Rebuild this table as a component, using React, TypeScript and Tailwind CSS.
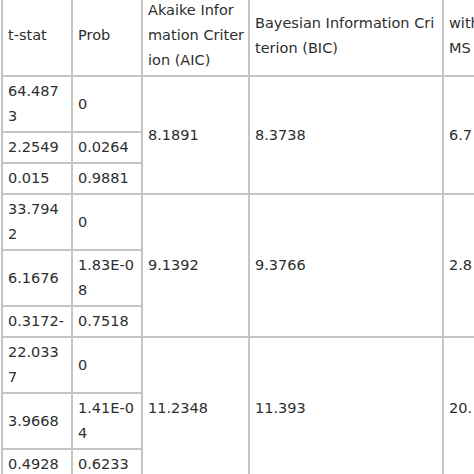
import * as React from "react";

type Group = {
  rows: { t: string; p: string }[];
  aic: string;
  bic: string;
  ms: string;
};

const groups: Group[] = [
  {
    rows: [
      { t: "64.4873", p: "0" },
      { t: "2.2549", p: "0.0264" },
      { t: "0.015", p: "0.9881" },
    ],
    aic: "8.1891",
    bic: "8.3738",
    ms: "6.7",
  },
  {
    rows: [
      { t: "33.7942", p: "0" },
      { t: "6.1676", p: "1.83E-08" },
      { t: "0.3172-", p: "0.7518" },
    ],
    aic: "9.1392",
    bic: "9.3766",
    ms: "2.8",
  },
  {
    rows: [
      { t: "22.0337", p: "0" },
      { t: "3.9668", p: "1.41E-04" },
      { t: "0.4928", p: "0.6233" },
    ],
    aic: "11.2348",
    bic: "11.393",
    ms: "20.",
  },
];

const cell =
  "border-2 border-[#c4c4c4] px-[5px] py-[2px] align-middle text-left font-normal leading-[25px] break-all";

const head = `${cell} border-t-0 py-0`;

export default function App() {
  return (
    <div className="h-[474px] w-[474px] overflow-hidden bg-white">
      <table
        className="-mt-1 ml-[1px] w-[570px] table-fixed border-collapse text-[14.5px] text-[#2e2e2e]"
        style={{ fontFamily: '"DejaVu Sans", Verdana, sans-serif' }}
      >
        <colgroup>
          <col className="w-[70px]" />
          <col className="w-[70px]" />
          <col className="w-[107px]" />
          <col className="w-[194px]" />
          <col className="w-[129px]" />
        </colgroup>
        <thead>
          <tr className="h-[77px]">
            <th className={head}>t-stat</th>
            <th className={head}>Prob</th>
            <th className={`${head} pr-[1px]`}>
              Akaike Information Criterion (AIC)
            </th>
            <th className={`${head} leading-[24px]`}>
              Bayesian Information Criterion (BIC)
            </th>
            <th className={`${head} leading-[24px]`}>
              with
              <br />
              MS
            </th>
          </tr>
        </thead>
        <tbody>
          {groups.map((g) =>
            g.rows.map((r, i) => (
              <tr key={g.aic + i}>
                <td className={cell}>{r.t}</td>
                <td className={cell}>{r.p}</td>
                {i === 0 && (
                  <>
                    <td rowSpan={3} className={cell}>
                      {g.aic}
                    </td>
                    <td rowSpan={3} className={cell}>
                      {g.bic}
                    </td>
                    <td rowSpan={3} className={cell}>
                      {g.ms}
                    </td>
                  </>
                )}
              </tr>
            ))
          )}
        </tbody>
      </table>
    </div>
  );
}
